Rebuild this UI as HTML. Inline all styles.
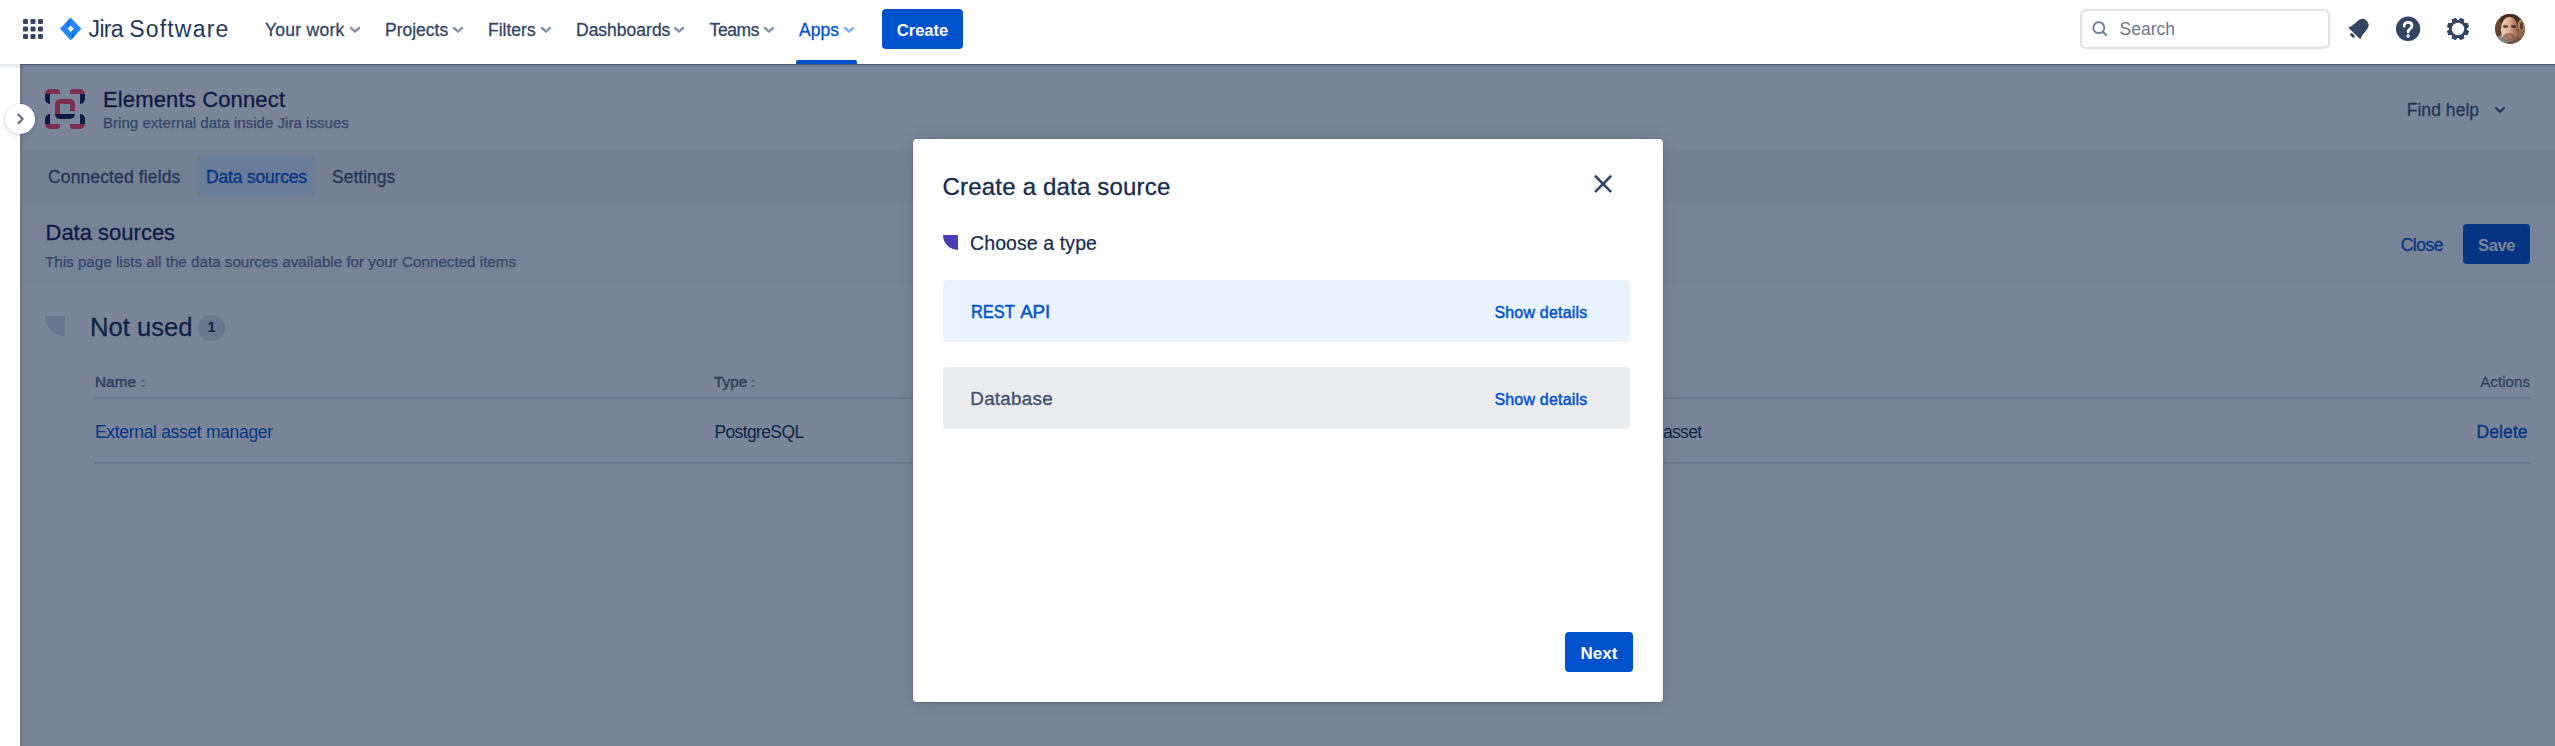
<!DOCTYPE html>
<html lang="en">
<head>
<meta charset="utf-8">
<title>Data sources - Elements Connect - Jira</title>
<style>
*{box-sizing:border-box;margin:0;padding:0}
html,body{width:2555px;height:746px;overflow:hidden;background:#fff}
body{font-family:"Liberation Sans",Arial,sans-serif;color:#172B4D;position:relative}
.abs{position:absolute;white-space:nowrap}
/* top nav */
#nav{position:absolute;left:0;top:0;width:2555px;height:64px;background:#fff;z-index:30}
#navshadow{position:absolute;left:0;top:64px;width:2555px;height:5px;background:linear-gradient(rgba(9,30,66,.12) 0,rgba(9,30,66,0) 5px);z-index:29}
.ni{position:absolute;top:0;height:64px;line-height:60px;font-size:17.5px;color:#344563;font-weight:400;white-space:nowrap;-webkit-text-stroke:.3px #344563}
.ni svg{position:absolute;top:23px}
.ni.act{color:#0052CC;-webkit-text-stroke:.3px #0052CC}
#create{position:absolute;left:882px;top:9px;width:81px;height:40px;border-radius:4px;background:#0052CC;color:#fff;font-weight:700;font-size:16.5px;line-height:43px;text-align:center}
#search{position:absolute;left:2080px;top:9px;width:250px;height:40px;border:2px solid #DFE1E6;border-radius:6px;background:#fff}
#search span{position:absolute;left:37.6px;top:.8px;line-height:35px;font-size:17.5px;color:#6B778C}
/* page */
#page{position:absolute;left:20px;top:64px;width:2535px;height:682px;background:#fff;z-index:1}
.band{position:absolute;left:0;width:2535px}
#blanket{position:absolute;left:20px;top:64px;width:2535px;height:682px;background:rgba(9,30,66,.54);z-index:10}
#leftedge{position:absolute;left:20px;top:64px;width:3px;height:682px;background:#E3E5EA;z-index:2}
.tab{font-size:17.5px;line-height:24px;color:#42526E;-webkit-text-stroke:.3px #42526E}
.th{font-size:15.2px;line-height:20px;color:#5E6C84;font-weight:400;-webkit-text-stroke:.55px #5E6C84;letter-spacing:.12px}
.td{font-size:17.5px;line-height:24px;color:#172B4D}
/* modal */
#modal{position:absolute;left:913px;top:139px;width:750px;height:563px;background:#fff;border-radius:4px;z-index:20;box-shadow:0 0 0 1px rgba(9,30,66,.08),0 2px 1px rgba(9,30,66,.08),0 0 20px -6px rgba(9,30,66,.31)}
.row{position:absolute;left:30px;width:687px;height:62px;border-radius:4px}
.row .t{position:absolute;left:27.3px;top:.9px;line-height:62px;font-size:18.8px}
.row .d{position:absolute;left:551.4px;top:1.6px;line-height:62px;font-size:16px;letter-spacing:.2px;color:#0052CC;-webkit-text-stroke:.45px #0052CC}
#next{position:absolute;left:652px;top:493px;width:68px;height:40px;border-radius:4px;background:#0052CC;color:#fff;font-weight:700;font-size:17px;line-height:43.4px;text-align:center}
</style>
</head>
<body>
<!-- NAV -->
<div id="nav">
  <svg class="abs" style="left:23px;top:19px" width="20" height="20" viewBox="0 0 20 20" fill="#344563"><rect x="0" y="0" width="5" height="5" rx="1.2"/><rect x="7.5" y="0" width="5" height="5" rx="1.2"/><rect x="15" y="0" width="5" height="5" rx="1.2"/><rect x="0" y="7.5" width="5" height="5" rx="1.2"/><rect x="7.5" y="7.5" width="5" height="5" rx="1.2"/><rect x="15" y="7.5" width="5" height="5" rx="1.2"/><rect x="0" y="15" width="5" height="5" rx="1.2"/><rect x="7.5" y="15" width="5" height="5" rx="1.2"/><rect x="15" y="15" width="5" height="5" rx="1.2"/></svg>
  <svg class="abs" style="left:59px;top:17px" width="24" height="24" viewBox="0 0 24 24"><defs><linearGradient id="jg1" x1="1" y1="0" x2="0" y2="0.35"><stop offset="0" stop-color="#0052CC"/><stop offset="1" stop-color="#2684FF" stop-opacity="0"/></linearGradient><linearGradient id="jg2" x1="0" y1="1" x2="1" y2="0.65"><stop offset="0" stop-color="#0052CC"/><stop offset="1" stop-color="#2684FF" stop-opacity="0"/></linearGradient></defs><path d="M11.7 0.4L22.4 11.8L11.7 23.2L1 11.8Z" fill="#2684FF"/><path d="M10.5 1.7V8.6L8.6 11.2L4.6 7.9Z" fill="url(#jg1)"/><path d="M12.9 21.9V15L14.8 12.4L18.8 15.7Z" fill="url(#jg2)"/><path d="M11.7 8.6L14.8 11.8L11.7 15L8.6 11.8Z" fill="#fff"/></svg>
  <div class="abs" id="jiratxt" style="left:88.6px;top:14.1px;font-size:23px;line-height:30px;color:#253858;word-spacing:-.1px"><span style="letter-spacing:-.7px">Jira</span> <span style="letter-spacing:1.2px">Software</span></div>
  <div class="ni" style="left:265px;letter-spacing:.27px">Your work<svg style="left:83px" width="14" height="14" viewBox="0 0 14 14"><path d="M3 5l4 3.6 4-3.6" fill="none" stroke="#8993A4" stroke-width="2.5" stroke-linecap="round" stroke-linejoin="round"/></svg></div>
  <div class="ni" style="left:385px">Projects<svg style="left:66px" width="14" height="14" viewBox="0 0 14 14"><path d="M3 5l4 3.6 4-3.6" fill="none" stroke="#8993A4" stroke-width="2.5" stroke-linecap="round" stroke-linejoin="round"/></svg></div>
  <div class="ni" style="left:488px">Filters<svg style="left:51px" width="14" height="14" viewBox="0 0 14 14"><path d="M3 5l4 3.6 4-3.6" fill="none" stroke="#8993A4" stroke-width="2.5" stroke-linecap="round" stroke-linejoin="round"/></svg></div>
  <div class="ni" style="left:576px">Dashboards<svg style="left:96px" width="14" height="14" viewBox="0 0 14 14"><path d="M3 5l4 3.6 4-3.6" fill="none" stroke="#8993A4" stroke-width="2.5" stroke-linecap="round" stroke-linejoin="round"/></svg></div>
  <div class="ni" style="left:709.6px;letter-spacing:-.4px">Teams<svg style="left:52.3px" width="14" height="14" viewBox="0 0 14 14"><path d="M3 5l4 3.6 4-3.6" fill="none" stroke="#8993A4" stroke-width="2.5" stroke-linecap="round" stroke-linejoin="round"/></svg></div>
  <div class="ni act" style="left:799px">Apps<svg style="left:43px" width="14" height="14" viewBox="0 0 14 14"><path d="M3 5l4 3.6 4-3.6" fill="none" stroke="#7FAEF2" stroke-width="2.5" stroke-linecap="round" stroke-linejoin="round"/></svg></div>
  <div class="abs" style="left:796px;top:60px;width:61px;height:4px;background:#0052CC;border-radius:2px 2px 0 0"></div>
  <div id="create">Create</div>
  <div id="search"><svg class="abs" style="left:8px;top:8px" width="20" height="20" viewBox="0 0 20 20"><circle cx="8.8" cy="8.7" r="5.5" fill="none" stroke="#6B778C" stroke-width="1.8"/><path d="M12.9 12.8l3.4 3.4" stroke="#6B778C" stroke-width="1.8" stroke-linecap="round"/></svg><span>Search</span></div>
<svg class="abs" style="left:2344px;top:14px" width="30" height="30" viewBox="-15 -15 30 30"><g transform="translate(0.2,-0.6) rotate(44)" fill="#344563"><path d="M-8.3 7H8.3V6.3C6.8 4.4 6.7 1 6.4-3C6.1-8.2 4.4-10.6 0-10.6C-4.4-10.6-6.1-8.2-6.4-3C-6.7 1-6.8 4.4-8.3 6.3Z"/><rect x="-2.7" y="8.3" width="5.4" height="2.8" rx="1.4"/></g></svg>
  <svg class="abs" style="left:2395px;top:16px" width="26" height="26" viewBox="0 0 26 26"><circle cx="13.1" cy="12.8" r="12.2" fill="#344563"/><path d="M9.2 10.2C9.2 7.8 10.8 6.4 13.1 6.4C15.4 6.4 17 7.8 17 9.9C17 12.6 13.1 12.8 13.1 16" fill="none" stroke="#fff" stroke-width="2.7" stroke-linecap="round"/><circle cx="13.1" cy="20" r="1.65" fill="#fff"/></svg>
  <svg class="abs" style="left:2445.8px;top:16.6px" width="24" height="24" viewBox="0 0 24 24"><path d="M20.43 13.12L22.53 14.39L21.13 17.76L18.75 17.16L17.16 18.75L17.76 21.13L14.39 22.53L13.12 20.43L10.88 20.43L9.61 22.53L6.24 21.13L6.84 18.75L5.25 17.16L2.87 17.76L1.47 14.39L3.57 13.12L3.57 10.88L1.47 9.61L2.87 6.24L5.25 6.84L6.84 5.25L6.24 2.87L9.61 1.47L10.88 3.57L13.12 3.57L14.39 1.47L17.76 2.87L17.16 5.25L18.75 6.84L21.13 6.24L22.53 9.61L20.43 10.88Z" fill="#344563" stroke="#344563" stroke-width="1.2" stroke-linejoin="round"/><circle cx="12" cy="12" r="6.2" fill="#fff"/></svg>
  <div class="abs" id="avatar" style="left:2495px;top:14px;width:30px;height:30px;border-radius:15px;overflow:hidden;background:#5C3E28"><div class="abs" style="left:22.79px;top:4.83px;width:7.51px;height:12.87px;border-radius:50%;background:#A88868;"></div><div class="abs" style="left:24.93px;top:7.51px;width:2.68px;height:8.04px;border-radius:50%;background:#5A3C26;"></div><div class="abs" style="left:0.27px;top:6.43px;width:5.36px;height:12.87px;border-radius:50%;background:#6A4A2E;"></div><div class="abs" style="left:20.11px;top:17.16px;width:10.19px;height:6.97px;border-radius:50%;background:#8A6A4C;"></div><div class="abs" style="left:1.34px;top:20.91px;width:11.8px;height:11.8px;border-radius:50%;background:#8C8A88;"></div><div class="abs" style="left:16.35px;top:23.06px;width:11.8px;height:9.65px;border-radius:50%;background:#6E5A48;"></div><div class="abs" style="left:5.36px;top:-0.54px;width:18.77px;height:12.33px;border-radius:50%;background:#4A2E1E;"></div><div class="abs" style="left:5.63px;top:3.49px;width:17.43px;height:24.13px;border-radius:50%;background:linear-gradient(90deg,#EDCDBA 0,#E2B49C 45%,#B27A5C 80%,#8E5C44 100%);"></div><div class="abs" style="left:7.51px;top:10.99px;width:5.09px;height:2.68px;border-radius:50%;background:rgba(50,25,20,.75);"></div><div class="abs" style="left:15.55px;top:10.99px;width:5.09px;height:2.68px;border-radius:50%;background:rgba(50,25,20,.75);"></div><div class="abs" style="left:8.04px;top:19.3px;width:12.33px;height:8.85px;border-radius:50%;background:rgba(95,62,50,.55);"></div><div class="abs" style="left:11.8px;top:21.45px;width:5.09px;height:2.68px;border-radius:50%;background:#BC7474;opacity:.8;"></div></div>
</div>
<div id="navshadow"></div>
<div class="abs" style="left:20px;top:64px;width:2535px;height:1px;background:rgba(9,30,66,.3);z-index:29"></div>

<!-- PAGE -->
<div id="page">
  <div class="band" style="top:0;height:86px;background:#fff"></div>
  <div class="band" style="top:86px;height:53px;background:#F4F5F7"></div>
  <div class="band" style="top:139px;height:82px;background:#FAFBFC"></div>
  <div class="band" style="top:221px;height:461px;background:#fff"></div>
  <!-- app logo -->
  <svg class="abs" style="left:25px;top:25px" width="40" height="40" viewBox="0 0 40 40">
    <g><path d="M0 5A5 5 0 0 1 5 0H12A3 3 0 0 1 15 3V5Z" fill="#FE455A"/><path d="M0 5H5V15A5 5 0 0 1 0 10Z" fill="#181546"/></g>
    <g transform="translate(40,0) scale(-1,1)"><path d="M0 5A5 5 0 0 1 5 0H12A3 3 0 0 1 15 3V5Z" fill="#FE455A"/><path d="M0 5H5V15A5 5 0 0 1 0 10Z" fill="#181546"/></g><g transform="translate(0,40) scale(1,-1)"><path d="M0 5A5 5 0 0 1 5 0H12A3 3 0 0 1 15 3V5Z" fill="#FE455A"/><path d="M0 5H5V15A5 5 0 0 1 0 10Z" fill="#181546"/></g><g transform="translate(40,40) scale(-1,-1)"><path d="M0 5A5 5 0 0 1 5 0H12A3 3 0 0 1 15 3V5Z" fill="#FE455A"/><path d="M0 5H5V15A5 5 0 0 1 0 10Z" fill="#181546"/></g>
    <g transform="translate(10,10)"><path d="M0 15V5A5 5 0 0 1 5 0H15A5 5 0 0 1 20 5V12H15V5H5V15Z" fill="#FE455A"/><path d="M0 15H20A5 5 0 0 1 15 20H5A5 5 0 0 1 0 15Z" fill="#181546"/></g>
  </svg>
  <div class="abs" id="ectitle" style="left:83px;top:20.7px;font-size:22px;line-height:30px;color:#181546;letter-spacing:.15px;-webkit-text-stroke:.3px #181546">Elements Connect</div>
  <div class="abs" id="ecsub" style="left:83px;top:48.7px;font-size:15.1px;line-height:20px;color:#6A7394;-webkit-text-stroke:.25px #6A7394">Bring external data inside Jira issues</div>
  <div class="abs" id="findhelp" style="left:2386.7px;top:34px;letter-spacing:.05px;font-size:17.5px;line-height:24px;color:#42526E;-webkit-text-stroke:.3px #42526E">Find help</div>
  <svg class="abs" style="left:2472px;top:38px" width="16" height="16" viewBox="0 0 16 16"><path d="M4 6l4 4 4-4" fill="none" stroke="#42526E" stroke-width="2.2" stroke-linecap="round" stroke-linejoin="round"/></svg>
  <!-- tabs -->
  <div class="abs" style="left:178px;top:92px;width:116px;height:40px;border-radius:4px;background:#DEEBFF"></div>
  <div class="abs tab" id="tab1" style="left:28px;top:101px;letter-spacing:.13px">Connected fields</div>
  <div class="abs tab" id="tab2" style="left:186px;top:101px;letter-spacing:-.18px;color:#0052CC;-webkit-text-stroke:.3px #0052CC">Data sources</div>
  <div class="abs tab" id="tab3" style="left:312px;top:101px">Settings</div>
  <!-- page heading -->
  <div class="abs" id="dstitle" style="left:25.5px;top:154px;font-size:22px;line-height:30px;color:#181546;-webkit-text-stroke:.3px #181546">Data sources</div>
  <div class="abs" id="dsdesc" style="left:25px;top:188.4px;font-size:15.2px;line-height:20px;color:#6A7394;-webkit-text-stroke:.25px #6A7394">This page lists all the data sources available for your Connected items</div>
  <div class="abs" id="closebtn" style="left:2380.7px;top:169px;font-size:17.5px;letter-spacing:-.5px;line-height:24px;color:#0052CC;-webkit-text-stroke:.3px #0052CC">Close</div>
  <div class="abs" id="savebtn" style="left:2443px;top:160px;width:67px;height:40px;border-radius:4px;background:#0052CC;color:#fff;font-weight:700;font-size:16.5px;letter-spacing:-.4px;line-height:43px;text-align:center">Save</div>
  <!-- section -->
  <svg class="abs" style="left:25px;top:252px" width="20" height="20" viewBox="0 0 20 20"><path d="M0 0H20V20A20 20 0 0 1 0 0Z" fill="#DCDEEA"/></svg>
  <div class="abs" id="notused" style="left:70px;top:246px;font-size:25.6px;line-height:34px;color:#172B4D;-webkit-text-stroke:.3px #172B4D">Not used</div>
  <div class="abs" style="left:178px;top:251.1px;width:27px;height:25.6px;border-radius:13px;background:#DFE1E6;color:#172B4D;font-weight:700;font-size:14.5px;line-height:25px;text-align:center">1</div>
  <!-- table -->
  <div class="abs th" id="thname" style="left:75px;top:307.7px">Name</div>
  <div class="abs th" id="thtype" style="left:694px;top:307.7px">Type</div>
  <div class="abs th" id="thact" style="right:25px;top:307.7px;font-size:15.2px;font-weight:400;letter-spacing:0;-webkit-text-stroke:.3px #5E6C84">Actions</div>
  <svg class="abs" style="left:119.8px;top:313.5px" width="6" height="11" viewBox="0 0 6 10" fill="#B3BAC5"><path d="M3 0.5L5.5 3.5H0.5Z"/><path d="M3 9.5L5.5 6.5H0.5Z"/></svg>
  <svg class="abs" style="left:729.6px;top:313.5px" width="6" height="11" viewBox="0 0 6 10" fill="#B3BAC5"><path d="M3 0.5L5.5 3.5H0.5Z"/><path d="M3 9.5L5.5 6.5H0.5Z"/></svg>
  <div class="abs" style="left:75px;top:333px;width:2435px;height:2px;background:#DFE1E6"></div>
  <div class="abs td" id="tdname" style="left:75px;top:355.8px;color:#0052CC;letter-spacing:-.32px">External asset manager</div>
  <div class="abs td" id="tdtype" style="left:694.4px;top:356px;letter-spacing:-.62px">PostgreSQL</div>
  <div class="abs td" id="tdasset" style="left:1643px;top:356px;letter-spacing:-.7px">asset</div>
  <div class="abs td" id="tddel" style="right:27.3px;top:356px;letter-spacing:.1px;color:#0052CC;-webkit-text-stroke:.35px #0052CC">Delete</div>
  <div class="abs" style="left:75px;top:398px;width:2435px;height:2px;background:#DFE1E6"></div>
</div>
<div id="leftedge"></div>
<div id="blanket"></div>

<div class="abs" id="toggle" style="left:5px;top:104px;width:30px;height:30px;border-radius:15px;background:#fff;z-index:25;box-shadow:0 0 0 1px rgba(9,30,66,.08),0 2px 4px 1px rgba(9,30,66,.08)"><svg class="abs" style="left:8px;top:8px" width="14" height="14" viewBox="0 0 14 14"><path d="M5.6 2.8L9.6 7L5.6 11.2" fill="none" stroke="#6B778C" stroke-width="2.4" stroke-linecap="round" stroke-linejoin="round"/></svg></div>
<!-- MODAL -->
<div id="modal">
  <div class="abs" id="mtitle" style="left:29.6px;top:31.8px;font-size:24px;letter-spacing:.19px;line-height:32px;color:#172B4D;-webkit-text-stroke:.3px #172B4D">Create a data source</div>
  <svg class="abs" style="left:678px;top:33px" width="24" height="24" viewBox="0 0 24 24"><path d="M4.7 4.5l14.8 14.8M19.5 4.5L4.7 19.3" stroke="#344563" stroke-width="2.6" stroke-linecap="round"/></svg>
  <svg class="abs" style="left:30px;top:96px" width="15" height="15" viewBox="0 0 15 15"><path d="M0 0H15V15A15 15 0 0 1 0 0Z" fill="#4B3FB5"/></svg>
  <div class="abs" id="choose" style="left:57px;top:90.2px;font-size:19.5px;letter-spacing:.1px;line-height:28px;color:#172B4D;-webkit-text-stroke:.2px #172B4D">Choose a type</div>
  <div class="row" style="top:141px;background:#E9F2FF"><div class="t" style="color:#0052CC;top:1px;-webkit-text-stroke:.5px #0052CC;word-spacing:.3px;left:27.6px"><span style="display:inline-block;transform:scaleX(.875);transform-origin:0 50%;margin-right:-6.1px">REST</span> <span style="letter-spacing:-.1px">API</span></div><div class="d">Show details</div></div>
  <div class="row" style="top:228px;background:#EBECF0"><div class="t" style="color:#42526E;letter-spacing:.28px;-webkit-text-stroke:.35px #42526E">Database</div><div class="d">Show details</div></div>
  <div id="next">Next</div>
</div>
</body>
</html>
